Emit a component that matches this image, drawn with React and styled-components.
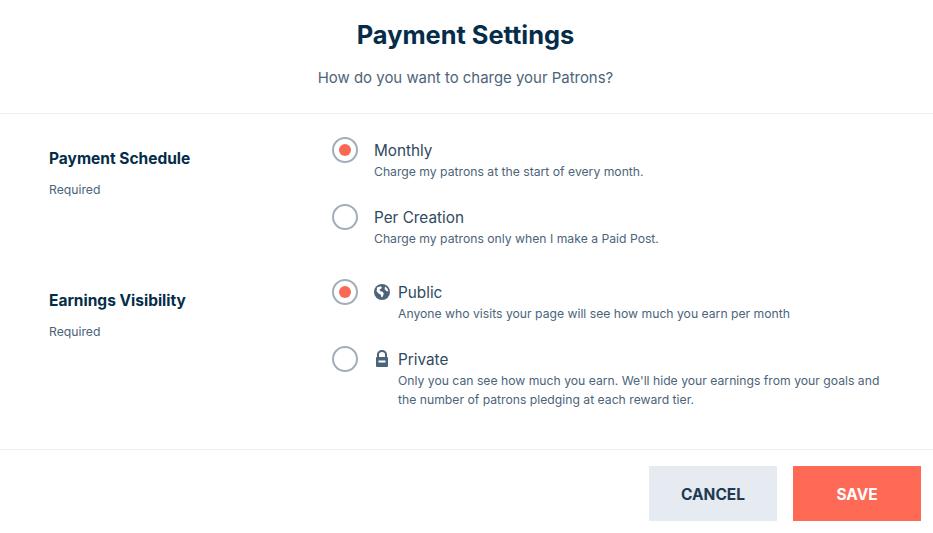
import styled, { createGlobalStyle } from "styled-components";

const GlobalStyle = createGlobalStyle`
  html, body {
    margin: 0;
    padding: 0;
    background: #fff;
  }
  body {
    font-family: Inter, "Noto Sans", sans-serif;
    color: #052d49;
  }
`;

const Globe = () => (
  <svg width="16" height="16" viewBox="0 0 16 16">
    <circle cx="8" cy="8" r="8" fill="#4c6479" />
    <path
      d="M3 3.4 6.4 2.2 8 3.4 6.8 5 5.4 5.4 6.4 7.2 8.6 7.8 9.8 9.6 8.8 12.4 7.4 13.4 6.8 10.8 4.6 9.4 2.6 7.2Z M11 2.6 13.4 4.6 14.4 7.4 12.4 7 10.6 5.2Z"
      fill="#fff"
    />
  </svg>
);

const Lock = () => (
  <svg width="16" height="17" viewBox="0 0 16 17">
    <path
      d="M4 8V4.6a4 3.6 0 0 1 8 0V8"
      fill="none"
      stroke="#4c6479"
      strokeWidth="2"
    />
    <rect x="2" y="7" width="12" height="10" rx="1" fill="#4c6479" />
    <rect x="4.5" y="10.5" width="7" height="2" fill="#fff" />
  </svg>
);

const App = () => {
  return (
    <Page>
      <GlobalStyle />
      <Header>
        <Title>Payment Settings</Title>
        <Subtitle>How do you want to charge your Patrons?</Subtitle>
      </Header>
      <Body>
        <Section>
          <SectionLabel>
            <SectionTitle>Payment Schedule</SectionTitle>
            <Required>Required</Required>
          </SectionLabel>
          <Options>
            <Option>
              <Radio $checked />
              <OptionText>
                <OptionName>Monthly</OptionName>
                <OptionHint>Charge my patrons at the start of every month.</OptionHint>
              </OptionText>
            </Option>
            <Option>
              <Radio />
              <OptionText>
                <OptionName>Per Creation</OptionName>
                <OptionHint>Charge my patrons only when I make a Paid Post.</OptionHint>
              </OptionText>
            </Option>
          </Options>
        </Section>
        <Section>
          <SectionLabel>
            <SectionTitle>Earnings Visibility</SectionTitle>
            <Required>Required</Required>
          </SectionLabel>
          <Options>
            <Option>
              <Radio $checked />
              <IconSlot>
                <Globe />
              </IconSlot>
              <OptionText>
                <OptionName>Public</OptionName>
                <OptionHint>Anyone who visits your page will see how much you earn per month</OptionHint>
              </OptionText>
            </Option>
            <Option>
              <Radio />
              <IconSlot>
                <Lock />
              </IconSlot>
              <OptionText>
                <OptionName>Private</OptionName>
                <OptionHint>
                  Only you can see how much you earn. We'll hide your earnings from your goals and
                  <br />
                  the number of patrons pledging at each reward tier.
                </OptionHint>
              </OptionText>
            </Option>
          </Options>
        </Section>
      </Body>
      <Footer>
        <Button>CANCEL</Button>
        <Button $primary>SAVE</Button>
      </Footer>
    </Page>
  );
};

const Page = styled.div`
  width: 933px;
  height: 533px;
  overflow: hidden;
  background: #fff;
`;

const Header = styled.div`
  height: 94px;
  border-bottom: 1px solid #eef0f3;
  display: flex;
  flex-direction: column;
  align-items: center;
  padding-top: 19px;
`;

const Title = styled.h1`
  margin: 0 2px 0 0;
  font-size: 25.4px;
  line-height: 32px;
  font-weight: 700;
  color: #052d49;
`;

const Subtitle = styled.div`
  margin: 18px 2px 0 0;
  font-size: 14.95px;
  line-height: 18px;
  color: #4c6479;
`;

const Body = styled.div`
  height: 336px;
  box-sizing: border-box;
  padding-top: 23px;
  display: flex;
  flex-direction: column;
  gap: 31px;
  border-bottom: 1px solid #eef0f3;
`;

const Section = styled.div`
  display: flex;
  padding-left: 49px;
`;

const SectionLabel = styled.div`
  width: 283px;
  flex-shrink: 0;
  padding-top: 13px;
`;

const SectionTitle = styled.div`
  font-size: 15.5px;
  line-height: 18px;
  font-weight: 700;
  color: #052d49;
`;

const Required = styled.div`
  margin-top: 14px;
  font-size: 12.2px;
  line-height: 16px;
  color: #4c6479;
`;

const Options = styled.div`
  display: flex;
  flex-direction: column;
  gap: 22px;
`;

const Option = styled.div`
  display: flex;
  align-items: flex-start;
`;

const Radio = styled.div`
  width: 26px;
  height: 26px;
  box-sizing: border-box;
  border: 2px solid #a3adb7;
  border-radius: 50%;
  margin-right: 16px;
  display: flex;
  align-items: center;
  justify-content: center;
  flex-shrink: 0;

  &::after {
    content: "";
    display: ${(p) => (p.$checked ? "block" : "none")};
    width: 12px;
    height: 12px;
    border-radius: 50%;
    background: #f96854;
  }
`;

const IconSlot = styled.div`
  width: 24px;
  height: 26px;
  display: flex;
  align-items: center;
  flex-shrink: 0;
`;

const OptionText = styled.div`
  display: flex;
  flex-direction: column;
  padding-top: 1px;
`;

const OptionName = styled.div`
  font-size: 15.3px;
  line-height: 26px;
  color: #2f4a60;
`;

const OptionHint = styled.div`
  font-size: 12.2px;
  line-height: 19.5px;
  margin-top: -2px;
  color: #4c6479;
`;

const Footer = styled.div`
  display: flex;
  justify-content: flex-end;
  gap: 16px;
  padding: 16px 12px 0 0;
`;

const Button = styled.button`
  width: 128px;
  height: 55px;
  border: 0;
  border-radius: 0;
  font-family: inherit;
  font-size: 15.5px;
  font-weight: 700;
  padding: 2px 0 0;
  background: ${(p) => (p.$primary ? "#ff6a57" : "#e5ebf0")};
  color: ${(p) => (p.$primary ? "#fff" : "#1f3a52")};
  cursor: pointer;
`;

export default App;
